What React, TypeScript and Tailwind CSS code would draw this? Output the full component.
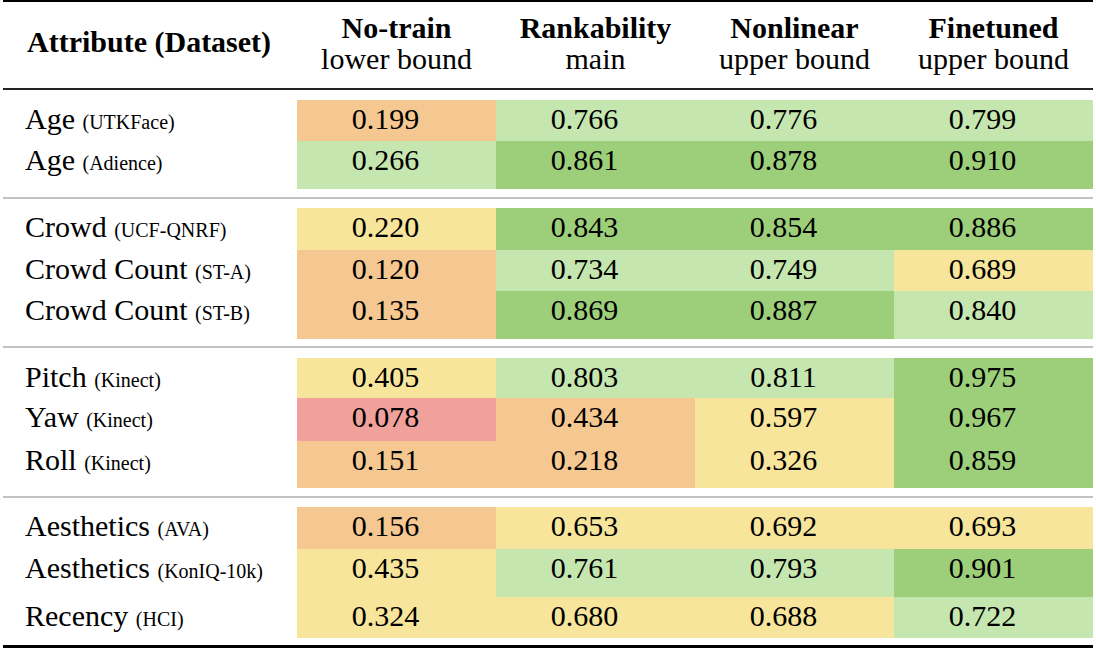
// Results table: rank correlation per attribute, colour-coded by score band.

type Band = 'red' | 'orange' | 'yellow' | 'light' | 'dark'

const BAND_CLASS: Record<Band, string> = {
  red: 'bg-[#f1a19b]',
  orange: 'bg-[#f6c891]',
  yellow: 'bg-[#f7e59b]',
  light: 'bg-[#c6e6af]',
  dark: 'bg-[#9dcf7b]',
}

type Row = {
  attr: string
  dataset: string
  height: string
  cells: [string, Band][]
}

type Group = { rows: Row[]; gap: string }

const HEADERS: { title: string; sub: string }[] = [
  { title: 'No-train', sub: 'lower bound' },
  { title: 'Rankability', sub: 'main' },
  { title: 'Nonlinear', sub: 'upper bound' },
  { title: 'Finetuned', sub: 'upper bound' },
]

// gap = spacing around the grey rule that follows the group
const GROUPS: Group[] = [
  {
    gap: 'pt-[8px] pb-[9px]',
    rows: [
      {
        attr: 'Age',
        dataset: '(UTKFace)',
        height: 'h-[41px]',
        cells: [['0.199', 'orange'], ['0.766', 'light'], ['0.776', 'light'], ['0.799', 'light']],
      },
      {
        attr: 'Age',
        dataset: '(Adience)',
        height: 'h-[48px]',
        cells: [['0.266', 'light'], ['0.861', 'dark'], ['0.878', 'dark'], ['0.910', 'dark']],
      },
    ],
  },
  {
    gap: 'pt-[7px] pb-[10px]',
    rows: [
      {
        attr: 'Crowd',
        dataset: '(UCF-QNRF)',
        height: 'h-[42px]',
        cells: [['0.220', 'yellow'], ['0.843', 'dark'], ['0.854', 'dark'], ['0.886', 'dark']],
      },
      {
        attr: 'Crowd Count',
        dataset: '(ST-A)',
        height: 'h-[41px]',
        cells: [['0.120', 'orange'], ['0.734', 'light'], ['0.749', 'light'], ['0.689', 'yellow']],
      },
      {
        attr: 'Crowd Count',
        dataset: '(ST-B)',
        height: 'h-[48px]',
        cells: [['0.135', 'orange'], ['0.869', 'dark'], ['0.887', 'dark'], ['0.840', 'light']],
      },
    ],
  },
  {
    gap: 'pt-[8px] pb-[9px]',
    rows: [
      {
        attr: 'Pitch',
        dataset: '(Kinect)',
        height: 'h-[40px]',
        cells: [['0.405', 'yellow'], ['0.803', 'light'], ['0.811', 'light'], ['0.975', 'dark']],
      },
      {
        attr: 'Yaw',
        dataset: '(Kinect)',
        height: 'h-[43px]',
        cells: [['0.078', 'red'], ['0.434', 'orange'], ['0.597', 'yellow'], ['0.967', 'dark']],
      },
      {
        attr: 'Roll',
        dataset: '(Kinect)',
        height: 'h-[47px]',
        cells: [['0.151', 'orange'], ['0.218', 'orange'], ['0.326', 'yellow'], ['0.859', 'dark']],
      },
    ],
  },
  {
    gap: 'pt-[7px]',
    rows: [
      {
        attr: 'Aesthetics',
        dataset: '(AVA)',
        height: 'h-[42px]',
        cells: [['0.156', 'orange'], ['0.653', 'yellow'], ['0.692', 'yellow'], ['0.693', 'yellow']],
      },
      {
        attr: 'Aesthetics',
        dataset: '(KonIQ-10k)',
        height: 'h-[48px]',
        cells: [['0.435', 'yellow'], ['0.761', 'light'], ['0.793', 'light'], ['0.901', 'dark']],
      },
      {
        attr: 'Recency',
        dataset: '(HCI)',
        height: 'h-[41px]',
        cells: [['0.324', 'yellow'], ['0.680', 'yellow'], ['0.688', 'yellow'], ['0.722', 'light']],
      },
    ],
  },
]

const COLS = 'grid grid-cols-[294px_199px_199px_199px_199px]'

function DataRow({ row }: { row: Row }) {
  return (
    <div className={`${COLS} ${row.height}`}>
      <div className="pl-[22px] text-[30px] leading-[38px] whitespace-nowrap">
        {row.attr} <span className="text-[20px]">{row.dataset}</span>
      </div>
      {row.cells.map(([value, band], i) => (
        <div
          key={i}
          className={`${BAND_CLASS[band]} pr-[22px] text-center text-[30px] leading-[38px]`}
        >
          {value}
        </div>
      ))}
    </div>
  )
}

export default function App() {
  return (
    <div className="h-[651px] w-[1096px] bg-white pl-[3px] font-['Liberation_Serif',serif] text-black">
      <div className="w-[1090px]">
        <div className="h-[2px] bg-black" />

        <div className={`${COLS} h-[86px]`}>
          <div className="pl-[24px] pt-[24px] text-[30px] font-bold leading-[31px] whitespace-nowrap">
            Attribute (Dataset)
          </div>
          {HEADERS.map((h) => (
            <div key={h.title} className="pt-[10px] text-center text-[30px] leading-[31px]">
              <div className="font-bold">{h.title}</div>
              <div>{h.sub}</div>
            </div>
          ))}
        </div>

        <div className="h-[2px] bg-[#222]" />
        <div className="h-[10px]" />

        {GROUPS.map((g, gi) => (
          <div key={gi}>
            {g.rows.map((r, ri) => (
              <DataRow key={ri} row={r} />
            ))}
            {gi < GROUPS.length - 1 ? (
              <div className={g.gap}>
                <div className="h-[2px] bg-[#c2c2c2]" />
              </div>
            ) : (
              <div className={g.gap}>
                <div className="h-[3px] bg-black" />
              </div>
            )}
          </div>
        ))}
      </div>
    </div>
  )
}
